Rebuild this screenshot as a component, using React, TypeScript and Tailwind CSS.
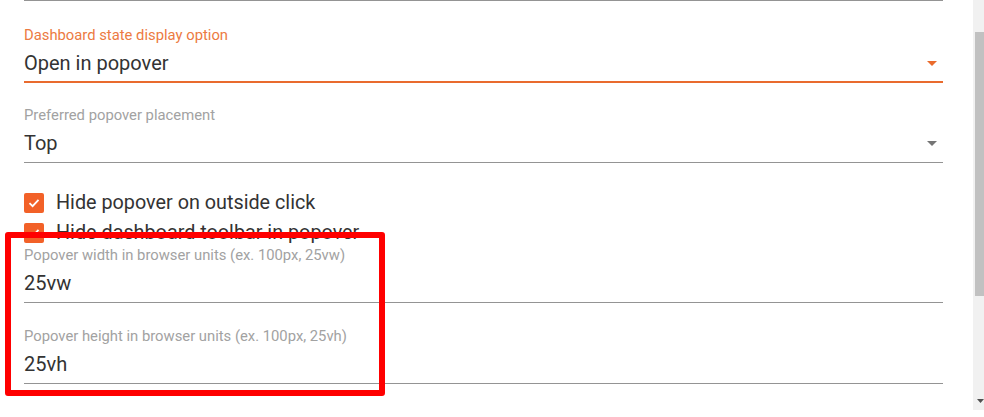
import React from 'react';

const FONT = { fontFamily: 'Roboto, "Liberation Sans", sans-serif' };

function Caret({ color }: { color: string }) {
  return (
    <svg width="10" height="5" viewBox="0 0 10 5" className="shrink-0">
      <path d="M0 0 L10 0 L5 5 Z" fill={color} />
    </svg>
  );
}

interface FieldProps {
  label: string;
  value: string;
  focused?: boolean;
  select?: boolean;
  className?: string;
}

function Field({ label, value, focused, select, className }: FieldProps) {
  return (
    <div className={className}>
      <div
        className={`h-4 text-[14.8px] leading-4 ${focused ? 'text-[#ec7a42]' : 'text-[#a2a2a2]'}`}
      >
        {label}
      </div>
      <div className="mt-2 flex h-6 items-center justify-between">
        <span className="text-[20px] leading-6 text-[#333333]">{value}</span>
        {select && (
          <span className="mr-[6px]">
            <Caret color={focused ? '#ea6b2c' : '#757575'} />
          </span>
        )}
      </div>
      {focused ? (
        <div className="mt-[6px] h-[2px] bg-[#e96b2e]" />
      ) : (
        <div className="mt-[7px] h-px bg-[#949494]" />
      )}
    </div>
  );
}

function Check({ label }: { label: string }) {
  return (
    <div className="flex h-5 items-center gap-3">
      <span className="flex h-5 w-5 items-center justify-center rounded-[2px] bg-[#f26128]">
        <svg width="14" height="14" viewBox="0 0 14 14">
          <path d="M2.5 7.2 L5.6 10.2 L11.5 3.8" fill="none" stroke="#fff" strokeWidth="1.8" />
        </svg>
      </span>
      <span className="text-[19.8px] leading-5 text-[#333333]">{label}</span>
    </div>
  );
}

export default function App() {
  return (
    <div className="relative flex h-[417px] w-[984px] overflow-hidden bg-white" style={FONT}>
      {/* Form column */}
      <div className="flex-1 pl-6 pr-[30px]">
        <div className="h-px bg-[#949494]" />
        <Field
          className="mt-[26px]"
          label="Dashboard state display option"
          value="Open in popover"
          focused
          select
        />
        <Field
          className="mt-6"
          label="Preferred popover placement"
          value="Top"
          select
        />
        <div className="mt-[30px] flex flex-col gap-[10px]">
          <Check label="Hide popover on outside click" />
          <Check label="Hide dashboard toolbar in popover" />
        </div>
        <Field
          className="mt-1"
          label="Popover width in browser units (ex. 100px, 25vw)"
          value="25vw"
        />
        <Field
          className="mt-[25px]"
          label="Popover height in browser units (ex. 100px, 25vh)"
          value="25vh"
        />
      </div>

      {/* Scrollbar */}
      <div className="flex h-[410px] w-[11px] flex-col bg-[#f1f1f1]">
        <div className="mt-8 ml-[2px] h-[264px] bg-[#c1c1c1]" />
        <div className="mt-auto mb-[6px] ml-[4px]">
          <svg width="7" height="5" viewBox="0 0 7 5">
            <path d="M0 0 L7 0 L3.5 4 Z" fill="#505050" />
          </svg>
        </div>
      </div>

      {/* Annotation highlight */}
      <div className="pointer-events-none absolute left-[5px] top-[232px] h-[164px] w-[380px] rounded-[3px] border-[6px] border-[#ff0000]" />
    </div>
  );
}
